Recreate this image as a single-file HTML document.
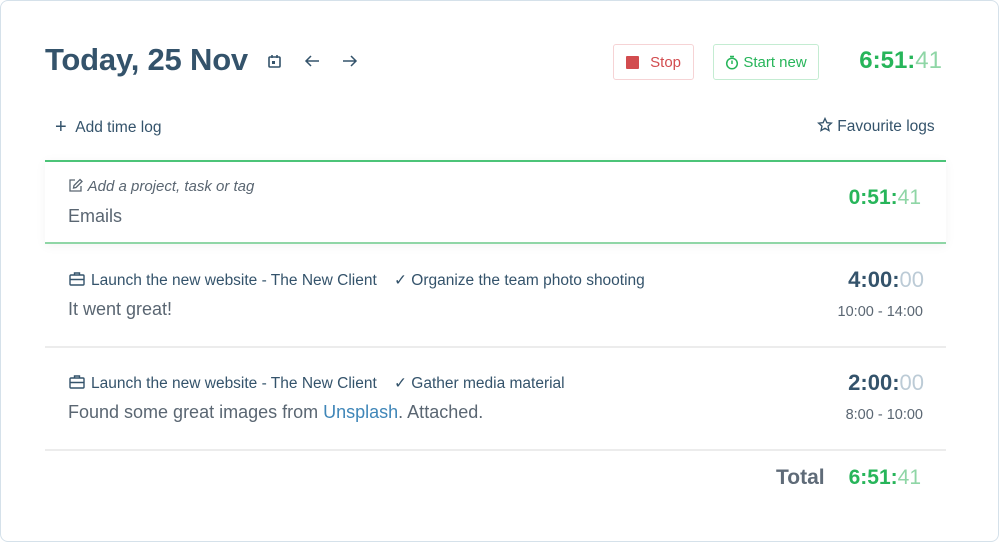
<!DOCTYPE html>
<html><head><style>
*{margin:0;padding:0;box-sizing:border-box}
body{width:999px;height:542px;background:#fff;font-family:"Liberation Sans",sans-serif;position:relative;overflow:hidden}
.card{position:absolute;left:0;top:0;width:999px;height:542px;border:1px solid #d5e1ea;border-radius:8px}
.a{position:absolute;white-space:nowrap}
.r{position:absolute;white-space:nowrap;text-align:right}
.dk{color:#34536b}
.gr{color:#27b55a}
.lg{color:#8fd6a6;font-weight:normal}
.gy{color:#bccbd6;font-weight:normal}
.sm{font-size:15.5px;color:#34536b}
.txt{font-size:18px;color:#5a6672}
.btn{position:absolute;height:36px;border-radius:3px;font-size:15px;display:flex;align-items:center;justify-content:center;gap:7px}
.line{position:absolute;left:45px;width:901px;height:2px;background:#ececec}
</style></head><body>
<div class="card"></div>
<div class="a dk" style="left:45px;top:42px;font-size:31px;font-weight:bold;letter-spacing:-0.2px">Today, 25 Nov</div>
<svg class="a" style="left:267px;top:54px" width="15" height="15" viewBox="0 0 15 15" fill="none" stroke="#34536b" stroke-width="1.6"><rect x="2" y="3" width="11" height="10" rx="1"/><line x1="5" y1="1" x2="5" y2="4"/><line x1="10" y1="1" x2="10" y2="4"/><rect x="5" y="7" width="3" height="3" fill="#34536b" stroke="none"/></svg>
<svg class="a" style="left:304px;top:54px" width="16" height="14" viewBox="0 0 16 14" fill="none" stroke="#34536b" stroke-width="1.5"><path d="M15 7H2M7 2L2 7l5 5"/></svg>
<svg class="a" style="left:342px;top:54px" width="16" height="14" viewBox="0 0 16 14" fill="none" stroke="#34536b" stroke-width="1.5"><path d="M1 7h13M9 2l5 5-5 5"/></svg>
<div class="btn" style="left:613px;top:44px;width:81px;border:1px solid #f6d3d5;color:#d24c4f"><span style="width:13px;height:13px;background:#d24c4f;border-radius:1px;display:inline-block"></span>&nbsp;Stop</div>
<div class="btn" style="left:713px;top:44px;width:106px;border:1px solid #c4ecd2;color:#27b55a;gap:4px"><svg width="14" height="15" viewBox="0 0 14 15" fill="none" stroke="#27b55a" stroke-width="1.5"><circle cx="7" cy="8.5" r="5.3"/><path d="M5 1.5h4M7 5.5v3.5"/></svg>Start new</div>
<div class="r gr" style="right:57px;top:47px;font-size:24px;font-weight:bold">6:51:<span class="lg">41</span></div>
<div class="a sm" style="left:55px;top:115px"><span style="font-size:20px;position:relative;top:1px">+</span>&nbsp;&nbsp;Add time log</div>
<div class="a sm" style="left:817px;top:117px"><svg width="16" height="16" viewBox="0 0 16 16" fill="none" stroke="#34536b" stroke-width="1.3" style="vertical-align:-2px"><path d="M8 1.5l1.9 4.2 4.5.4-3.4 3 1 4.5L8 11.3 4 13.6l1-4.5-3.4-3 4.5-.4z"/></svg> Favourite logs</div>
<div class="a" style="left:45px;top:160px;width:901px;height:84px;border-top:2px solid #4cc478;border-bottom:2px solid #8fd6a6;box-shadow:0 2px 10px rgba(0,0,0,0.05)"></div>
<div class="a" style="left:68px;top:178px;font-size:15px;font-style:italic;color:#5a6672"><svg width="16" height="15" viewBox="0 0 16 15" fill="none" stroke="#5a6672" stroke-width="1.3" style="vertical-align:-2px"><path d="M7 2H2v11h11V8"/><path d="M12 1.5l2 2-6 6-2.5.5.5-2.5z"/></svg> Add a project, task or tag</div>
<div class="a txt" style="left:68px;top:206px">Emails</div>
<div class="r gr" style="right:78px;top:186px;font-size:21px;font-weight:bold">0:51:<span class="lg">41</span></div>
<svg class="a" style="left:69px;top:272px" width="16" height="14" viewBox="0 0 16 14" fill="none" stroke="#34536b" stroke-width="1.4"><rect x="1" y="3" width="14" height="10" rx="1"/><path d="M5.5 3V1h5v2M1 7.5h14"/></svg>
<div class="a sm" style="left:91px;top:271px">Launch the new website - The New Client&nbsp;&nbsp;&nbsp;&nbsp;✓ Organize the team photo shooting</div>
<div class="a txt" style="left:68px;top:299px">It went great!</div>
<div class="r dk" style="right:75px;top:267px;font-size:22px;font-weight:bold">4:00:<span class="gy">00</span></div>
<div class="r" style="right:76px;top:304px;font-size:14.5px;color:#5a6672">10:00 - 14:00</div>
<div class="line" style="top:346px"></div>
<svg class="a" style="left:69px;top:375px" width="16" height="14" viewBox="0 0 16 14" fill="none" stroke="#34536b" stroke-width="1.4"><rect x="1" y="3" width="14" height="10" rx="1"/><path d="M5.5 3V1h5v2M1 7.5h14"/></svg>
<div class="a sm" style="left:91px;top:374px">Launch the new website - The New Client&nbsp;&nbsp;&nbsp;&nbsp;✓ Gather media material</div>
<div class="a txt" style="left:68px;top:402px">Found some great images from <span style="color:#3f86b8">Unsplash</span>. Attached.</div>
<div class="r dk" style="right:75px;top:370px;font-size:22px;font-weight:bold">2:00:<span class="gy">00</span></div>
<div class="r" style="right:76px;top:407px;font-size:14.5px;color:#5a6672">8:00 - 10:00</div>
<div class="line" style="top:449px"></div>
<div class="a" style="left:776px;top:466px;font-size:21px;font-weight:bold;color:#5f6b78">Total</div>
<div class="r gr" style="right:78px;top:466px;font-size:21px;font-weight:bold">6:51:<span class="lg">41</span></div>
</body></html>
